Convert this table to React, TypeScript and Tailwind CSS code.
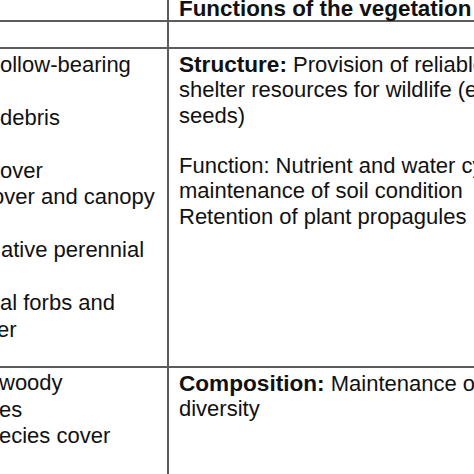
import React from "react";

const leftRow1: { t: string; cls: string }[] = [
  { t: "ollow-bearing", cls: "ml-0" },
  { t: "", cls: "ml-0" },
  { t: "debris", cls: "ml-0" },
  { t: "", cls: "ml-0" },
  { t: "over", cls: "ml-0" },
  { t: "over and canopy", cls: "-ml-[8px]" },
  { t: "", cls: "ml-0" },
  { t: "ative perennial", cls: "ml-[1px]" },
  { t: "", cls: "ml-0" },
  { t: "al forbs and", cls: "ml-0" },
  { t: "er", cls: "-ml-[3px]" },
];

const leftRow2: { t: string; cls: string }[] = [
  { t: "woody", cls: "-ml-[1px]" },
  { t: "es", cls: "-ml-[1px]" },
  { t: "ecies cover", cls: "-ml-[1px]" },
];

function Line({ t, cls }: { t: string; cls: string }) {
  return (
    <div className={`whitespace-nowrap h-[26.5px] leading-[26.5px] ${cls}`}>
      {t || "\u00a0"}
    </div>
  );
}

export default function App() {
  return (
    <div
      className="w-[474px] h-[474px] overflow-hidden bg-white text-[#111111] text-[22px]"
      style={{ fontFamily: '"Liberation Sans", Arial, sans-serif' }}
    >
      {/* header row */}
      <div className="flex h-[22px] border-b-2 border-[#5c5c5c]">
        <div className="w-[169px] shrink-0 border-r-2 border-[#5c5c5c]" />
        <div className="pl-[10px] font-bold whitespace-nowrap leading-[26px] -mt-[4px] text-[22.4px]">
          Functions of the vegetation attribute
        </div>
      </div>
      {/* blank row */}
      <div className="flex h-[27px] border-b-2 border-[#5c5c5c]">
        <div className="w-[169px] shrink-0 border-r-2 border-[#5c5c5c]" />
        <div className="flex-1" />
      </div>
      {/* row 1 */}
      <div className="flex h-[319px] border-b-2 border-[#5c5c5c]">
        <div className="w-[169px] shrink-0 border-r-2 border-[#5c5c5c] overflow-hidden pt-[2.5px]">
          {leftRow1.map((l, i) => (
            <Line key={i} t={l.t} cls={l.cls} />
          ))}
        </div>
        <div className="pl-[10px] whitespace-nowrap leading-[25.3px] pt-[3px]">
          <div>
            <span className="font-bold text-[22.6px]">Structure:</span> Provision of reliable food and
          </div>
          <div>shelter resources for wildlife (e.g. fruits,</div>
          <div>seeds)</div>
          <div>&nbsp;</div>
          <div>Function: Nutrient and water cycling,</div>
          <div>maintenance of soil condition</div>
          <div>Retention of plant propagules</div>
        </div>
      </div>
      {/* row 2 */}
      <div className="flex flex-1 h-[120px]">
        <div className="w-[169px] shrink-0 border-r-2 border-[#5c5c5c] overflow-hidden pt-[2px]">
          {leftRow2.map((l, i) => (
            <Line key={i} t={l.t} cls={l.cls} />
          ))}
        </div>
        <div className="pl-[10px] whitespace-nowrap leading-[25.3px] pt-[3px]">
          <div>
            <span className="font-bold text-[22.6px]">Composition:</span> Maintenance of species
          </div>
          <div>diversity</div>
        </div>
      </div>
    </div>
  );
}
